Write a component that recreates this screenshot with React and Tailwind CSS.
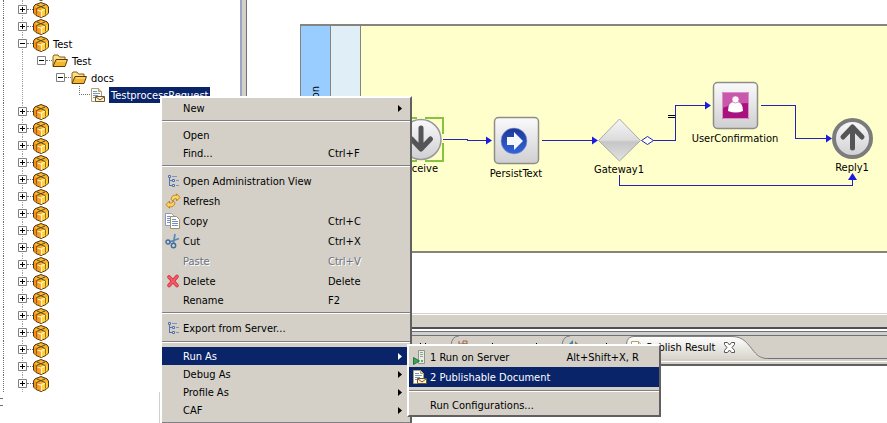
import clsx from 'clsx';

const PackageIcon = () => (
  <svg width="16" height="16" viewBox="0 0 16 16" className="shrink-0">
    <path d="M8 0.5 14 2.8 15.5 5v6L13 13.500l-5 2L3 13.500 0.500 11V5L2 2.800z" fill="#f8a820" stroke="#3a2408" strokeWidth="0.900" />
    <path d="M2 4.500 8 1.500 14 4.500 8 7z" fill="#fbb832" />
    <path d="M1.300 5.500 8 7.500V15L3.500 13 1.300 11z" fill="#f08c14" />
    <path d="M4.500 8 8 9v5.500L4.500 13z" fill="#ff9c28" />
    <path d="M8 7.500V15l4.500-2 2.200-2V5.500z" fill="#ffd23c" />
    <path d="M4.500 8 8 9l4-2M8.500 9v6" fill="none" stroke="#fff6b8" strokeWidth="1.200" />
    <path d="M4 3l8 3.500M12 3 3.500 6.500" stroke="#4a4018" strokeWidth="0.900" />
    <path d="M3.500 6.500v6M12.500 6.500v6" stroke="#7a5814" strokeWidth="0.800" />
  </svg>
);

const FolderIcon = () => (
  <svg width="16" height="16" viewBox="0 0 16 16" className="shrink-0">
    <path d="M1 13V3.5L2 2h4l1.5 2H13v3" fill="#fbe08a" stroke="#8a5a10" />
    <path d="M1 13.5 4 6.5h11.5L13 13.5z" fill="#f3b52c" stroke="#5c3a08" />
    <path d="M5 8h9" stroke="#ffe893" />
  </svg>
);

const DocumentIcon = () => (
  <svg width="16" height="16" viewBox="0 0 16 16" className="shrink-0">
    <path d="M1.5 1.5h7l3 3v10h-10z" fill="#fdfdf8" stroke="#b0a070" />
    <path d="M8.5 1.5v3h3" fill="#e8d8a0" stroke="#b0a070" />
    <path d="M3 4.5h4M3 6.5h7M3 8.5h5M3 10.5h2" stroke="#7c94c4" />
    <path d="M5.5 9.5h9v5h-9z" fill="#fff2cc" stroke="#6b5530" />
    <path d="m6 10 4 3 4-3" fill="none" stroke="#6b5530" />
  </svg>
);

const HierarchyIcon = () => (
  <svg width="16" height="16" viewBox="0 0 16 16">
    <path d="M4.500 4v9M5 7.500h3M5 12.500h3" stroke="#5572ad" fill="none" />
    <path d="M3.500 2.500h2v2h-2zM7.500 6.500h2v2h-2zM7.500 11.500h2v2h-2z" fill="#dce5f5" stroke="#5572ad" />
    <path d="M7 3.500h5M11 7.500h3M11 12.500h3" stroke="#7d93c0" />
  </svg>
);

const RefreshIcon = () => (
  <svg width="16" height="16" viewBox="0 0 16 16">
    <path d="M6 6.500C6.500 3 9 1.500 11.500 2.500V0.800L15 4.300 11.500 8V6C9.500 5.500 8.500 6 8 8z" fill="#fbd35e" stroke="#b57a14" strokeWidth="0.9" />
    <path d="M10 9.500C9.500 13 7 14.500 4.500 13.500v1.700L1 11.700 4.500 8v2C6.500 10.500 7.500 10 8 8z" fill="#fbd35e" stroke="#b57a14" strokeWidth="0.9" />
  </svg>
);

const CopyIcon = () => (
  <svg width="16" height="16" viewBox="0 0 16 16">
    <path d="M0.500 0.500h6l3 3v9h-9z" fill="#fff" stroke="#8b9cb8" />
    <path d="M2 3.500h4M2 5.500h3M2 7.500h3M2 9.500h3" stroke="#6f8fca" />
    <path d="M5.500 3.500h6l3 3v9h-9z" fill="#fff" stroke="#a0935c" />
    <path d="M7 6.500h4M7 8.500h6M7 10.500h6M7 12.500h6" stroke="#6f8fca" />
  </svg>
);

const CutIcon = () => (
  <svg width="16" height="16" viewBox="0 0 16 16">
    <path d="M10 1 8.500 10M14 5.500 4.500 9" stroke="#5f87ad" strokeWidth="1.700" />
    <circle cx="3" cy="9" r="2" fill="none" stroke="#3f6e9e" strokeWidth="1.400" />
    <circle cx="8.500" cy="12.500" r="2.200" fill="none" stroke="#3f6e9e" strokeWidth="1.400" />
  </svg>
);

const DeleteIcon = () => (
  <svg width="16" height="16" viewBox="0 0 16 16">
    <path d="M4 4l8 8.500M12 3.500 4 12.500" stroke="#d02a3c" strokeWidth="3.600" strokeLinecap="round" />
    <path d="M4 4l8 8.500M12 3.500 4 12.500" stroke="#f25a66" strokeWidth="2.300" strokeLinecap="round" />
  </svg>
);

const ServerIcon = () => (
  <svg width="16" height="16" viewBox="0 0 16 16">
    <path d="M6.500 1.500h6v13h-6z" fill="#e9efe4" stroke="#8b9690" />
    <path d="M8 3.500h3M8 5.500h3M8 7.500h3" stroke="#8fa58c" />
    <path d="M9 11h2v2H9z" fill="#5fae5f" />
    <path d="M1.500 8.500v7l6-3.500z" fill="#3fa35a" stroke="#1f7a3a" />
  </svg>
);

const treeRows = [
  { open: false }, { open: false }, { open: false },
  { open: true, label: 'Test', level: 0 },
  { open: true, label: 'Test', level: 1 },
  { open: true, label: 'docs', level: 2 },
  { leaf: true, label: 'TestprocessRequest', level: 3 },
  ...Array.from({ length: 17 }, () => ({ open: false })),
];

const indents = ['pl-[14px]', 'pl-[33px]', 'pl-[52px]', 'pl-[71px]'];

const Toggle = ({ open, label }) => (
  <button type="button" aria-label={`${open ? 'Collapse' : 'Expand'} ${label || 'package'}`} className="shrink-0">
    <svg width="9" height="9" viewBox="0 0 9 9" className="block">
      <path d="M0.500 0.500h8v8h-8z" fill="#fff" stroke="#808080" />
      <path d={open ? 'M2 4.500h5' : 'M2 4.500h5M4.500 2v5'} stroke="#000" />
    </svg>
  </button>
);

const TreeRow = ({ open, leaf, label, level = 0 }) => (
  <li className="flex h-[17px]">
    <div className="ml-[3px] flex flex-1 border-l border-dotted border-gray-500">
      <div className={clsx('relative flex items-center', indents[level])}>
        {/* guide of the package level */}
        <span className={clsx('absolute inset-y-0 left-[18px] border-l border-dotted border-gray-400', level === 0 && '-z-10')} />
        {leaf ? (
          <>
            <span className="ml-1 h-[9px] w-[11px] self-start border-b border-l border-dotted border-gray-500" />
            <DocumentIcon />
            <span className="ml-[3px] bg-[#0a246a] px-0.5 pt-0.5 text-white">{label}</span>
          </>
        ) : (
          <>
            <Toggle open={open} label={label} />
            <span className="w-1.5 border-t border-dotted border-gray-500" />
            {level > 0 ? <FolderIcon /> : <PackageIcon />}
            <span className="ml-1 pt-0.5">{label}</span>
          </>
        )}
      </div>
    </div>
  </li>
);

const menuItems = [
  { label: 'New', arrow: true },
  null,
  { label: 'Open' },
  { label: 'Find...', keys: 'Ctrl+F' },
  null,
  { label: 'Open Administration View', icon: <HierarchyIcon />, tall: true },
  { label: 'Refresh', icon: <RefreshIcon />, tall: true },
  { label: 'Copy', keys: 'Ctrl+C', icon: <CopyIcon />, tall: true },
  { label: 'Cut', keys: 'Ctrl+X', icon: <CutIcon />, tall: true },
  { label: 'Paste', keys: 'Ctrl+V', disabled: true, tall: true },
  { label: 'Delete', keys: 'Delete', icon: <DeleteIcon />, tall: true },
  { label: 'Rename', keys: 'F2' },
  null,
  { label: 'Export from Server...', icon: <HierarchyIcon />, tall: true },
  null,
  { label: 'Run As', arrow: true, active: true },
  { label: 'Debug As', arrow: true },
  { label: 'Profile As', arrow: true },
  { label: 'CAF', arrow: true },
  null,
];

const runItems = [
  { label: '1 Run on Server', keys: 'Alt+Shift+X, R', icon: <ServerIcon />, tall: true },
  { label: '2 Publishable Document', icon: <DocumentIcon />, active: true, tall: true },
  null,
  { label: 'Run Configurations...' },
];

const Menu = ({ items, name, keysClass, className }) => (
  <div
    role="menu"
    aria-label={name}
    className={clsx('absolute border-2 border-t-white border-l-white border-r-[#606060] border-b-[#606060] bg-[#d4d0c8] pt-px', className)}
  >
    {items.map((item, i) =>
      item ? (
        <button
          key={i}
          type="button"
          role="menuitem"
          disabled={item.disabled}
          className={clsx(
            'flex w-full items-center text-left',
            item.tall ? 'h-5' : 'h-[18px]',
            item.active && 'bg-[#0a246a] text-white',
            item.disabled && 'text-gray-500 [text-shadow:1px_1px_0_#fff]'
          )}
        >
          <span className="flex w-[21px] shrink-0 justify-center">{item.icon}</span>
          <span className="flex-1 whitespace-nowrap pt-0.5">{item.label}</span>
          <span className={clsx('whitespace-nowrap pt-0.5', keysClass)}>{item.keys}</span>
          {item.arrow && (
            <svg width="4" height="7" viewBox="0 0 4 7" className="-ml-3 mr-2">
              <path d="M0 0v7l4-3.500z" fill="currentColor" />
            </svg>
          )}
        </button>
      ) : (
        <div key={i} role="separator" className="h-[9px] pt-[3px]">
          <div className="h-0.5 border-t border-b border-t-[#808080] border-b-white" />
        </div>
      )
    )}
  </div>
);

const Arrow = ({ x, y }) => <path d={`M${x - 6} ${y - 4}v8l6-4z`} fill="#1c1ce0" />;

const Diagram = () => (
  <svg width="526" height="225" viewBox="361 26 526 225" className="block max-w-none shrink-0">
    <defs>
      <linearGradient id="steel" x1="0" y1="0" x2="0" y2="1">
        <stop offset="0" stopColor="#fafafc" />
        <stop offset="1" stopColor="#cfcfd2" />
      </linearGradient>
      <linearGradient id="gate" x1="0" y1="0" x2="0" y2="1">
        <stop offset="0" stopColor="#f6f6f6" />
        <stop offset="0.5" stopColor="#dcdcdc" />
        <stop offset="0.55" stopColor="#c6c6c6" />
        <stop offset="1" stopColor="#e2e2e2" />
      </linearGradient>
      <linearGradient id="blue" x1="0" y1="0" x2="0" y2="1">
        <stop offset="0" stopColor="#1c3797" />
        <stop offset="1" stopColor="#3465d8" />
      </linearGradient>
    </defs>

    <g fill="none" stroke="#2424b4" shapeRendering="crispEdges">
      <path d="M443 139.500h24v1h19M542 140.500h50M653 140.500h22.500v-35H705M761 105.500h34.500v33H827M619.500 175v10.500h233V179" />
    </g>
    <Arrow x={492} y={140.5} />
    <Arrow x={598} y={140.5} />
    <Arrow x={711} y={105.5} />
    <Arrow x={832} y={138.5} />
    <path d="M848 180h9l-4.500-7z" fill="#1c1ce0" />
    <path d="M641.500 140.500l6-4 6 4-6 4z" fill="#fff" stroke="#2424b4" />
    <path d="M668 115.500h7M668 117.500h7" stroke="#000" />

    {/* start */}
    <circle cx="421" cy="139.500" r="20" fill="url(#steel)" stroke="#999" strokeWidth="1.500" />
    <path d="M421 128v20M411.500 139l9.500 10 9.500-10" fill="none" stroke="#555" strokeWidth="5" strokeLinecap="round" strokeLinejoin="round" />
    <path d="M412 118h5M425 118h18v16M443 143v18h-18M417 161h-5" fill="none" stroke="#86c440" strokeWidth="2" />

    <rect x="494.500" y="117.500" width="44" height="46" rx="4" fill="url(#steel)" stroke="#8e8e86" strokeWidth="1.500" />
    <circle cx="514" cy="141" r="13" fill="url(#blue)" stroke="#8fa5d8" strokeWidth="0.600" />
    <path d="M507 137h7v-5l9 9-9 9v-5h-7z" fill="#f4f7fc" />

    <path d="M619.500 119l21 21.500-21 20.500-21-20.500z" fill="url(#gate)" stroke="#aaa" />

    <rect x="713.500" y="82.500" width="44" height="46" rx="4" fill="url(#steel)" stroke="#8e8e86" strokeWidth="1.500" />
    <path d="M722 92h27v27h-27z" fill="#a8127f" />
    <path d="M722 92h27v11q-13 0-27 5z" fill="#c957ab" />
    <path d="M722.500 92.500h26v26h-26z" fill="none" stroke="#d893c5" />
    <path d="M728 111q0-8 5-9h5q5 1 5 9-7 3-15 0z" fill="#fff" />
    <circle cx="735.500" cy="99.500" r="3.500" fill="#fff" stroke="#c957ab" strokeWidth="0.600" />

    {/* end */}
    <circle cx="852.500" cy="138.500" r="18.500" fill="url(#steel)" stroke="#7c7c7c" strokeWidth="4" />
    <path d="M852.500 148v-20M843 137l9.500-10 9.500 10" fill="none" stroke="#555" strokeWidth="5" strokeLinecap="round" strokeLinejoin="round" />

    <g textAnchor="middle" fill="#000">
      <text x="438" y="172" textAnchor="end">Receive</text>
      <text x="516" y="177">PersistText</text>
      <text x="619" y="173">Gateway1</text>
      <text x="735" y="142">UserConfirmation</text>
      <text x="852" y="171">Reply1</text>
    </g>
  </svg>
);

const ViewTabs = () => (
  <section aria-label="Views" className="flex flex-1 flex-col">
    <div className="h-1 border-t border-gray-500 bg-[#d4d0c8]" />
    <div className="flex h-6 border-t border-b border-gray-500 bg-[#d4d0c8]">
      <svg width="379" height="22" viewBox="247 336 379 22" className="shrink-0">
        <path d="M451 345q1-9 8-9M562 345q1-9 8-9" fill="none" stroke="#808080" />
        <path d="M459 341v3h8M463 341h4v3h-4z" fill="none" stroke="#9a6240" />
        <path d="M569 344l4-4v5z" fill="#2c86c8" />
        <path d="M575 341l3 3h-3z" fill="#a8713a" />
        <path d="M420 343.500h1M425 343.500h1M492 343.500h1M536 343.500h1M606 343.500h1" stroke="#000" />
      </svg>
      <div className="relative flex w-[142px] shrink-0 items-center">
        <svg width="142" height="23" viewBox="0 0 142 23" className="absolute left-0 top-0">
          <defs>
            <linearGradient id="tab" x1="0" y1="0" x2="0" y2="1">
              <stop offset="0" stopColor="#fff" />
              <stop offset="1" stopColor="#d8d4cc" />
            </linearGradient>
          </defs>
          <path d="M0.500 23V8Q1 0.500 8 0.500h98c12 0 16 8 22 15 4 5 8 7 14 7.500z" fill="url(#tab)" />
          <path d="M0.500 23V8Q1 0.500 8 0.500h98c12 0 16 8 22 15 4 5 8 7 14 7" fill="none" stroke="#808080" />
        </svg>
        <button type="button" className="relative flex items-center pl-1 pt-0.5">
          <DocumentIcon />
          <span className="w-[70px] whitespace-nowrap">Publish Result</span>
        </button>
        <button type="button" aria-label="Close Publish Result" className="relative ml-2">
          <svg width="11" height="11" viewBox="0 0 11 11" className="block">
            <path d="M0.500 0.500h3l2 2.500 2-2.500h3v2L8 5.500l2.500 3v2h-3l-2-2.500-2 2.500h-3v-2L3 5.500l-2.500-3z" fill="#fff" stroke="#555" />
          </svg>
        </button>
      </div>
    </div>
    <div className="flex h-[7px] flex-col border-b-2 border-[#606060] bg-[#d4d0c8] pt-0.5">
      <div className="h-px bg-white" />
    </div>
    <div className="flex-1 bg-white" />
  </section>
);

export default function App() {
  return (
    <div className="relative isolate flex h-screen overflow-hidden bg-white font-['Tahoma','DejaVu_Sans_Condensed','Noto_Sans',sans-serif] text-[11px] leading-[14px] text-black">
      <nav aria-label="Navigator" className="w-[240px] shrink-0 overflow-hidden">
        <ul className="-mt-4">
          {treeRows.map((row, i) => (
            <TreeRow key={i} {...row} />
          ))}
        </ul>
        <div className="flex h-8 items-end">
          <div className="mr-[157px] h-[26px] w-0.5">
            <div className="h-2 border-y border-dotted border-gray-500" />
          </div>
          <div className="h-full border-l border-[#d4d0c8]" />
        </div>
      </nav>
      <div className="w-[7px] shrink-0 border-r border-l-2 border-l-[#9da5c4] border-r-gray-500 bg-[#d4d0c8]" />

      <main className="flex min-w-0 flex-1 flex-col">
        <section aria-label="Process editor" className="h-[313px] pl-[53px] pt-6">
          <div className="flex h-[229px] overflow-hidden border-y-2 border-l border-[#85857d]">
            <div className="flex w-[30px] shrink-0 items-start justify-center border-r border-[#85857d] bg-[#99ccff] pt-[60px]">
              <span className="rotate-180 [writing-mode:vertical-rl]">Administration</span>
            </div>
            <div className="w-[30px] shrink-0 border-r border-[#85857d] bg-[#e0eef8]" />
            <div className="flex-1 bg-[#ffffcc]">
              <Diagram />
            </div>
          </div>
        </section>
        <div className="h-4 border-b-2 border-t border-b-[#505050] border-t-[#d4d0c8] bg-[#d4d0c8]">
          <div className="h-px bg-white" />
        </div>
        <div className="h-0.5 bg-white" />
        <ViewTabs />
      </main>

      <Menu items={menuItems} name="Context menu" className="left-[160px] top-24 w-[252px]" keysClass="w-[82px]" />
      <Menu items={runItems} name="Run As" className="left-[407px] top-[344px] w-[254px] pb-px" keysClass="pr-5" />
    </div>
  );
}
